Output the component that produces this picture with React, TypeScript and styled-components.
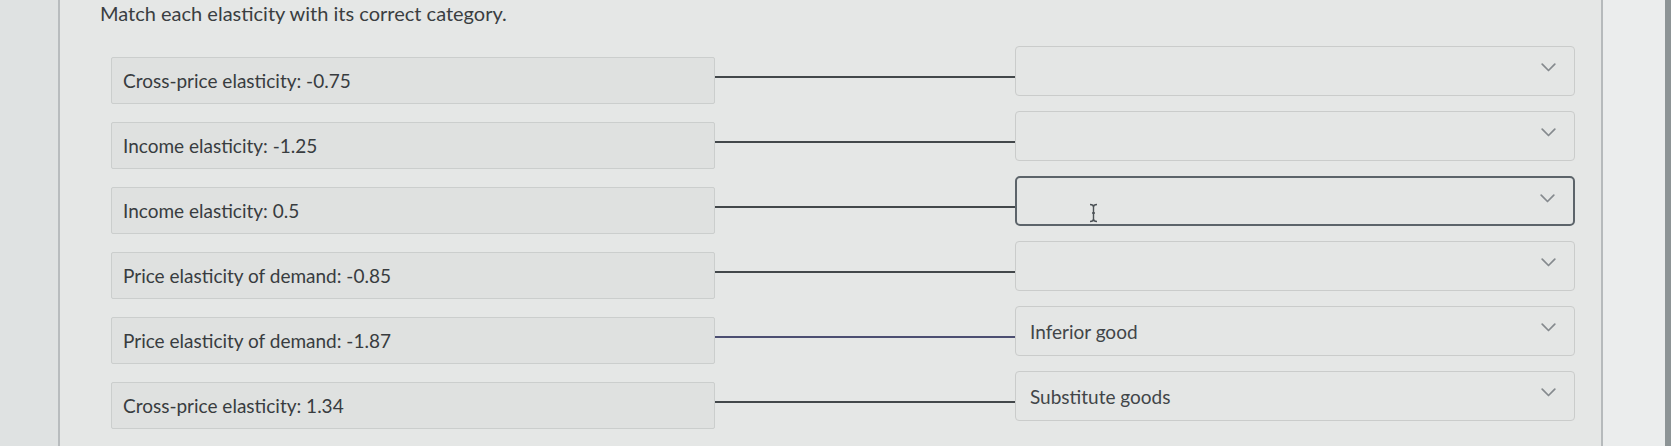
import React from "react";
import styled, { createGlobalStyle } from "styled-components";

const Global = createGlobalStyle`
  html, body { margin: 0; padding: 0; }
  body {
    background: #e4e6e5;
    font-family: Lato, "Open Sans", "Liberation Sans", sans-serif;
    overflow: hidden;
  }
`;

const Page = styled.div`
  display: flex;
  width: 1671px;
  height: 446px;
  background: #e4e6e5;
`;

const Gutter = styled.div`
  width: 58px;
  flex-shrink: 0;
  background: #dfe2e2;
  border-right: 2px solid #b8bcbe;
`;

const Panel = styled.main`
  flex: 0 0 1543px;
  padding: 1px 26px 0 40px;
  box-sizing: border-box;
  border-right: 2px solid #b6babc;
  background: #e5e7e6;
`;

const Margin = styled.div`
  flex: 1;
  background: #ebeded;
  border-right: 6px solid #8d9496;
`;

const Title = styled.h1`
  margin: 0;
  font-size: 20px;
  line-height: 24px;
  font-weight: 400;
  color: #3a3e41;
`;

const Rows = styled.div`
  display: flex;
  flex-direction: column;
  gap: 8px;
  margin-top: 21px;
`;

const Row = styled.div`
  display: flex;
  align-items: flex-start;
  height: 57px;
`;

const Prompt = styled.div`
  box-sizing: border-box;
  width: 604px;
  height: 47px;
  margin: 11px 0 0 11px;
  padding-left: 11px;
  display: flex;
  align-items: center;
  background: #dfe1e0;
  border: 1px solid #cbcecd;
  border-radius: 2px;
  font-size: 19px;
  color: #383c3f;
`;

const Connector = styled.div<{ $tint?: boolean }>`
  flex: 1;
  height: 2px;
  margin-top: 30px;
  background: ${(p) => (p.$tint ? "#4c4f72" : "#43484b")};
`;

const Select = styled.div<{ $focused?: boolean }>`
  position: relative;
  box-sizing: border-box;
  width: 560px;
  height: 50px;
  margin-left: ${(p) => (p.$focused ? "-4px" : "0")};
  padding: 15px 0 0 14px;
  background: #e4e6e5;
  border: ${(p) => (p.$focused ? "2px solid #5c646a" : "1px solid #cacccb")};
  border-radius: ${(p) => (p.$focused ? "5px" : "4px")};
  font-size: 19px;
  line-height: 20px;
  color: #414548;
`;

const Chevron = styled.svg`
  position: absolute;
  right: 18px;
  top: 16px;
  width: 15px;
  height: 9px;
`;

const Cursor = styled.svg`
  position: absolute;
  left: 72px;
  top: 25px;
  width: 9px;
  height: 20px;
`;

const items = [
  { prompt: "Cross-price elasticity: -0.75", answer: "" },
  { prompt: "Income elasticity: -1.25", answer: "" },
  { prompt: "Income elasticity: 0.5", answer: "", focused: true },
  { prompt: "Price elasticity of demand: -0.85", answer: "" },
  { prompt: "Price elasticity of demand: -1.87", answer: "Inferior good", tint: true },
  { prompt: "Cross-price elasticity: 1.34", answer: "Substitute goods" },
];

export default function App() {
  return (
    <>
      <Global />
      <Page>
        <Gutter />
        <Panel>
          <Title>Match each elasticity with its correct category.</Title>
          <Rows>
            {items.map((it) => (
              <Row key={it.prompt}>
                <Prompt>{it.prompt}</Prompt>
                <Connector $tint={it.tint} />
                <Select $focused={it.focused}>
                  {it.answer}
                  <Chevron viewBox="0 0 15 9">
                    <path d="M1.2 1.2 L7.5 7.5 L13.8 1.2" fill="none" stroke="#858a8e" strokeWidth="1.7" strokeLinecap="round" strokeLinejoin="round" />
                  </Chevron>
                  {it.focused && (
                    <Cursor viewBox="0 0 9 20">
                      <path d="M1 1.5 Q4.5 1.5 4.5 4 L4.5 16 Q4.5 18.5 1 18.5 M8 1.5 Q4.5 1.5 4.5 4 M4.5 16 Q4.5 18.5 8 18.5 M3 10 L6 10" fill="none" stroke="#4c5256" strokeWidth="1.4" />
                    </Cursor>
                  )}
                </Select>
              </Row>
            ))}
          </Rows>
        </Panel>
        <Margin />
      </Page>
    </>
  );
}
